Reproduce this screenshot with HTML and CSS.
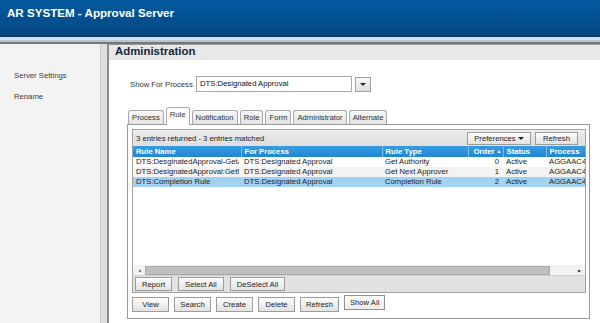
FILE: index.html
```html
<!DOCTYPE html>
<html lang="en">
<head>
    <meta charset="UTF-8">
    <title>AR SYSTEM - Approval Server</title>
    <link rel="stylesheet" href="styles.css">
</head>
<body>
    <header class="top">
        <h1>AR SYSTEM - Approval Server</h1>
    </header>
    <div class="strip"></div>

    <div class="main">
        <aside class="sidebar">
            <a class="side-link">Server Settings</a>
            <a class="side-link">Rename</a>
        </aside>

        <section class="content">
            <h2 class="content-title">Administration</h2>
            <div class="content-body">
                <div class="process-row">
                    <label class="process-label">Show For Process</label>
                    <div class="select-box">DTS:Designated Approval</div>
                    <button class="select-btn"><span class="caret"></span></button>
                </div>

                <div class="tabs">
                    <span class="tab">Process</span>
                    <span class="tab active">Rule</span>
                    <span class="tab">Notification</span>
                    <span class="tab">Role</span>
                    <span class="tab">Form</span>
                    <span class="tab">Administrator</span>
                    <span class="tab">Alternate</span>
                </div>

                <div class="tab-panel">
                    <div class="grid">
                        <div class="grid-toolbar">
                            <span class="grid-count">3 entries returned - 3 entries matched</span>
                            <button class="btn btn-pref">Preferences <span class="caret"></span></button>
                            <button class="btn btn-refresh">Refresh</button>
                        </div>
                        <div class="grid-table-wrap">
                            <table class="grid-table">
                                <colgroup>
                                    <col class="c1"><col class="c2"><col class="c3"><col class="c4"><col class="c5"><col class="c6">
                                </colgroup>
                                <thead>
                                    <tr>
                                        <th>Rule Name</th>
                                        <th>For Process</th>
                                        <th>Rule Type</th>
                                        <th class="num">Order <span class="sort">&#9650;</span></th>
                                        <th>Status</th>
                                        <th><span class="cell">Process ID</span></th>
                                    </tr>
                                </thead>
                                <tbody>
                                    <tr>
                                        <td><span class="cell">DTS:DesginatedApproval-GetA</span></td>
                                        <td>DTS:Designated Approval</td>
                                        <td>Get Authority</td>
                                        <td class="num">0</td>
                                        <td>Active</td>
                                        <td>AGGAAC4</td>
                                    </tr>
                                    <tr class="alt">
                                        <td><span class="cell">DTS:DesignatedApproval:GetN</span></td>
                                        <td>DTS:Designated Approval</td>
                                        <td>Get Next Approver</td>
                                        <td class="num">1</td>
                                        <td>Active</td>
                                        <td>AGGAAC4</td>
                                    </tr>
                                    <tr class="selected">
                                        <td>DTS:Completion Rule</td>
                                        <td>DTS:Designated Approval</td>
                                        <td>Completion Rule</td>
                                        <td class="num">2</td>
                                        <td>Active</td>
                                        <td>AGGAAC4</td>
                                    </tr>
                                </tbody>
                            </table>
                        </div>
                        <div class="hscroll">
                            <span class="arrow left">&#9664;</span>
                            <span class="thumb"></span>
                            <span class="arrow right">&#9654;</span>
                        </div>
                        <div class="grid-footer">
                            <button class="btn">Report</button>
                            <button class="btn">Select All</button>
                            <button class="btn">DeSelect All</button>
                        </div>
                    </div>

                    <div class="actions">
                        <button class="btn btn-lg">View</button>
                        <button class="btn btn-lg">Search</button>
                        <button class="btn btn-lg">Create</button>
                        <button class="btn btn-lg">Delete</button>
                        <button class="btn btn-lg">Refresh</button>
                        <button class="btn btn-lg btn-up">Show All</button>
                    </div>
                </div>
            </div>
        </section>
    </div>
</body>
</html>
```

FILE: styles.css
```css
html, body {
    margin: 0;
    padding: 0;
}
body {
    width: 600px;
    height: 323px;
    overflow: hidden;
    font-family: 'Liberation Sans', Arial, sans-serif;
    font-size: 7.7px;
    color: #222;
    background-color: #dedede;
}
button {
    font-family: inherit;
    font-size: inherit;
    color: inherit;
    margin: 0;
}
.top {
    height: 36px;
    background: linear-gradient(#025a9f, #03508f 55%, #074480);
    border-bottom: 1px solid #0c3866;
}
.top h1 {
    margin: 0;
    padding: 5px 0 0 7px;
    font-size: 11.6px;
    line-height: 16px;
    color: #fff;
}
.strip {
    height: 3px;
    background-color: #cfe1ea;
    border-bottom: 2px solid #b8c7cf;
    box-shadow: 0 2px 0 #6f7780;
    margin-bottom: 2px;
}
.main {
    display: flex;
    height: 279px;
}
.sidebar {
    width: 100px;
    background-color: #f3f3f3;
    border-right: 1px solid #c9c9c9;
    padding-top: 27px;
    display: flex;
    flex-direction: column;
    gap: 12px;
}
.side-link {
    padding-left: 14px;
    line-height: 9px;
    color: #3c3c3c;
}
.content {
    flex: 1;
    margin-left: 6px;
    background-color: #fff;
    border-left: 2px solid #8d8d8d;
    border-top: 1px solid #9a9a9a;
}
.content-title {
    margin: 0;
    height: 15px;
    background-color: #e8e8e8;
    font-size: 11.4px;
    line-height: 13px;
    padding-left: 6px;
    color: #14273c;
}
.content-body {
    padding: 16px 0 0 18px;
}
.process-row {
    display: flex;
    align-items: center;
    height: 16px;
}
.process-label {
    margin-left: 3px;
    width: 66px;
    color: #333;
}
.select-box {
    width: 151px;
    height: 14px;
    line-height: 14px;
    border: 1px solid #a8a8a8;
    padding-left: 3px;
    color: #111;
}
.select-btn {
    margin-left: 3px;
    width: 16px;
    height: 15px;
    border: 1px solid #a0a0a0;
    background: linear-gradient(#fafafa, #dcdcdc);
    padding: 0;
    display: flex;
    align-items: center;
    justify-content: center;
}
.caret {
    display: inline-block;
    width: 0;
    height: 0;
    border-left: 3px solid transparent;
    border-right: 3px solid transparent;
    border-top: 3px solid #222;
    vertical-align: middle;
}
.tabs {
    display: flex;
    align-items: flex-end;
    gap: 2px;
    margin-top: 15px;
    padding-left: 1px;
    height: 17px;
}
.tab {
    height: 13px;
    line-height: 13px;
    padding: 0 3px;
    border: 1px solid #a9a9a9;
    border-bottom: none;
    border-radius: 3px 3px 0 0;
    background: linear-gradient(#f7f7f7, #e3e3e3);
    color: #333;
}
.tab.active {
    height: 17px;
    line-height: 14px;
    background: #fff;
    position: relative;
    top: 1px;
}
.tab-panel {
    border: 1px solid #999;
    padding: 4px;
    box-sizing: border-box;
    width: 463px;
    height: 195px;
}
.grid {
    border: 1px solid #a3a3a3;
    height: 162px;
    display: flex;
    flex-direction: column;
    background-color: #fff;
    width: 452px;
}
.grid-toolbar {
    display: flex;
    align-items: center;
    height: 16px;
    background: linear-gradient(#ececec, #dedede);
    padding: 0 7px 0 3px;
}
.grid-count {
    flex: 1;
}
.btn {
    height: 13px;
    padding: 0 6px;
    border: 1px solid #9c9c9c;
    background: linear-gradient(#fdfdfd, #e2e2e2);
    line-height: 11px;
    white-space: nowrap;
}
.btn-pref {
    width: 64px;
}
.btn-refresh {
    width: 43px;
    margin-left: 4px;
}
.grid-table-wrap {
    flex: 1;
    overflow: hidden;
}
.grid-table {
    border-collapse: collapse;
    table-layout: fixed;
    width: 452px;
}
.c1 { width: 108px; }
.c2 { width: 141px; }
.c3 { width: 86px; }
.c4 { width: 35px; }
.c5 { width: 43px; }
.c6 { width: 39px; }
.grid-table th {
    height: 11px;
    padding: 0 3px;
    text-align: left;
    color: #fff;
    font-weight: bold;
    background: linear-gradient(#3a9be0, #1f86d2);
    border-right: 1px solid #7cbdeb;
    white-space: nowrap;
    overflow: hidden;
    line-height: 11px;
}
.grid-table td {
    height: 10px;
    line-height: 10px;
    padding: 0 2px 0 3px;
    white-space: nowrap;
    overflow: hidden;
    color: #1a1a1a;
}
.cell {
    display: block;
    overflow: hidden;
}
.grid-table .num {
    text-align: right;
    padding-right: 4px;
}
.grid-table th.num {
    padding-right: 1px;
}
.sort {
    font-size: 5px;
    vertical-align: top;
}
.grid-table tr.alt td {
    background-color: #f3f3f3;
}
.grid-table tr.selected td {
    background-color: #a2d2f3;
}
.hscroll {
    display: flex;
    align-items: center;
    height: 10px;
    background-color: #f2f2f2;
}
.arrow {
    font-size: 4px;
    color: #777;
    width: 12px;
    text-align: center;
}
.thumb {
    width: 405px;
    height: 9px;
    background-color: #bfbfbf;
    border: 1px solid #a9a9a9;
    box-sizing: border-box;
}
.arrow.right {
    margin-left: auto;
    color: #333;
}
.grid-footer {
    display: flex;
    align-items: center;
    gap: 6px;
    height: 16px;
    padding-left: 2px;
    background-color: #e2e2e2;
    border-top: 1px solid #cfcfcf;
}
.grid-footer .btn {
    height: 14px;
    padding: 0 6px;
}
.actions {
    display: flex;
    gap: 5px;
    margin-top: 4px;
}
.btn-lg {
    height: 15px;
    min-width: 37px;
    padding: 0 5px;
}
.btn-up {
    position: relative;
    top: -2px;
    border-color: #8f8f8f;
    background: linear-gradient(#fff, #ececec);
}
```
